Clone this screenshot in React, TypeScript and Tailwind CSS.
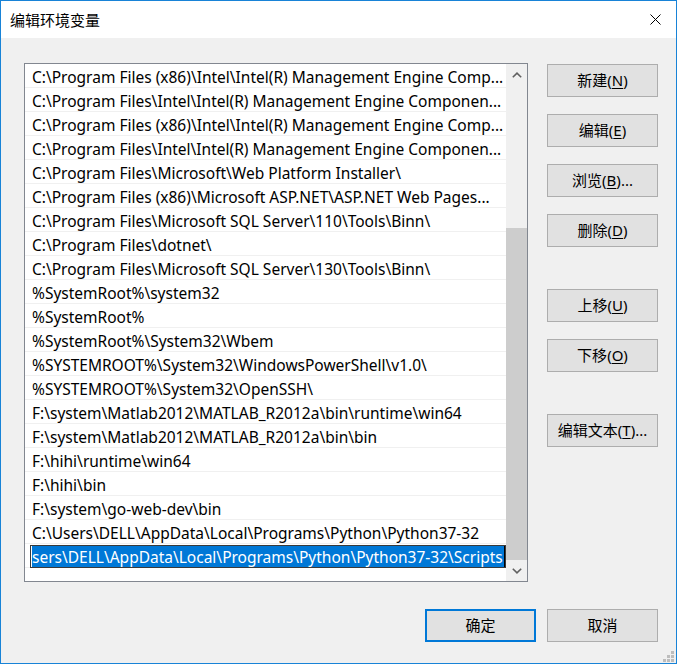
import React from "react";

const rows: string[] = [
  "C:\\Program Files (x86)\\Intel\\Intel(R) Management Engine Comp...",
  "C:\\Program Files\\Intel\\Intel(R) Management Engine Componen...",
  "C:\\Program Files (x86)\\Intel\\Intel(R) Management Engine Comp...",
  "C:\\Program Files\\Intel\\Intel(R) Management Engine Componen...",
  "C:\\Program Files\\Microsoft\\Web Platform Installer\\",
  "C:\\Program Files (x86)\\Microsoft ASP.NET\\ASP.NET Web Pages...",
  "C:\\Program Files\\Microsoft SQL Server\\110\\Tools\\Binn\\",
  "C:\\Program Files\\dotnet\\",
  "C:\\Program Files\\Microsoft SQL Server\\130\\Tools\\Binn\\",
  "%SystemRoot%\\system32",
  "%SystemRoot%",
  "%SystemRoot%\\System32\\Wbem",
  "%SYSTEMROOT%\\System32\\WindowsPowerShell\\v1.0\\",
  "%SYSTEMROOT%\\System32\\OpenSSH\\",
  "F:\\system\\Matlab2012\\MATLAB_R2012a\\bin\\runtime\\win64",
  "F:\\system\\Matlab2012\\MATLAB_R2012a\\bin\\bin",
  "F:\\hihi\\runtime\\win64",
  "F:\\hihi\\bin",
  "F:\\system\\go-web-dev\\bin",
  "C:\\Users\\DELL\\AppData\\Local\\Programs\\Python\\Python37-32",
];

const font = {
  fontFamily: '"Noto Sans", "Noto Sans CJK SC", sans-serif',
};

function Btn({
  label,
  mn,
  suffix = "",
  primary = false,
}: {
  label: string;
  mn?: string;
  suffix?: string;
  primary?: boolean;
}) {
  return (
    <div
      className={
        primary
          ? "w-[111px] h-[33px] shrink-0 border-2 border-[#0078d7] bg-[#e1e1e1] flex items-center justify-center text-[15px] text-black"
          : "w-[111px] h-[33px] shrink-0 border border-[#adadad] bg-[#e1e1e1] flex items-center justify-center text-[15px] text-black"
      }
    >
      <span className="whitespace-nowrap leading-none">
        {label}
        {mn ? (
          <>
            (<span className="underline underline-offset-2">{mn}</span>)
          </>
        ) : null}
        {suffix}
      </span>
    </div>
  );
}

export default function App() {
  return (
    <div
      className="relative w-[677px] h-[664px] border border-[#1883d7] bg-[#f0f0f0] flex flex-col text-black"
      style={font}
    >
      {/* title bar */}
      <div className="h-[37px] bg-white flex items-center justify-between shrink-0">
        <span className="pl-[9px] pt-[1px] text-[15px] leading-none">编辑环境变量</span>
        <svg width="11" height="11" viewBox="0 0 11 11" className="mr-[15px]">
          <path d="M0.5 0.5 L10.5 10.5 M10.5 0.5 L0.5 10.5" stroke="#000" strokeWidth="1" fill="none" />
        </svg>
      </div>

      {/* body */}
      <div className="flex flex-col pt-[25px] pl-[23px] pr-[18px] pb-[21px]">
        <div className="flex gap-[19px]">
          {/* list box */}
          <div className="w-[504px] h-[519px] border border-[#828790] bg-white flex">
            <div className="w-[481px] flex flex-col text-[15.5px]">
              {rows.map((r, i) => (
                <div
                  key={i}
                  className="h-[24px] border-b border-[#f0f0f0] pl-[7px] pt-[3px] leading-[20px] whitespace-nowrap overflow-hidden"
                >
                  {r}
                </div>
              ))}
              <div className="h-[24px] border-b border-[#f0f0f0] pt-[1px] pl-[5px]">
                <div className="w-[476px] h-[23px] border border-[#3a3a3a] flex items-center pl-[1px]">
                  <div className="w-[472px] h-[21px] bg-[#0078d7] text-white pt-[1px] leading-[20px] whitespace-nowrap overflow-hidden">
                    sers\DELL\AppData\Local\Programs\Python\Python37-32\Scripts
                  </div>
                  <div className="w-[1px] h-[21px] bg-black" />
                </div>
              </div>
            </div>
            {/* scrollbar */}
            <div className="w-[21px] bg-[#f0f0f0] flex flex-col">
              <div className="h-[21px] flex items-center justify-center">
                <svg width="10" height="6" viewBox="0 0 10 6">
                  <path d="M0.8 5.3 L5 1.2 L9.2 5.3" stroke="#606060" strokeWidth="1.6" fill="none" />
                </svg>
              </div>
              <div className="h-[143px]" />
              <div className="h-[332px] bg-[#cdcdcd]" />
              <div className="h-[21px] flex items-center justify-center">
                <svg width="10" height="6" viewBox="0 0 10 6">
                  <path d="M0.8 0.7 L5 4.8 L9.2 0.7" stroke="#606060" strokeWidth="1.6" fill="none" />
                </svg>
              </div>
            </div>
          </div>

          {/* buttons column */}
          <div className="flex flex-col pt-[1px]">
            <Btn label="新建" mn="N" />
            <div className="h-[17px]" />
            <Btn label="编辑" mn="E" />
            <div className="h-[17px]" />
            <Btn label="浏览" mn="B" suffix="..." />
            <div className="h-[17px]" />
            <Btn label="删除" mn="D" />
            <div className="h-[42px]" />
            <Btn label="上移" mn="U" />
            <div className="h-[17px]" />
            <Btn label="下移" mn="O" />
            <div className="h-[42px]" />
            <Btn label="编辑文本" mn="T" suffix="..." />
          </div>
        </div>

        <div className="flex justify-end gap-[11px] mt-[27px]">
          <Btn label="确定" primary />
          <Btn label="取消" />
        </div>
      </div>

      {/* resize grip */}
      <svg width="11" height="11" viewBox="0 0 11 11" className="absolute right-[2px] bottom-[1px]">
        <rect x="8" y="0" width="3" height="3" fill="#bdbdbd" />
        <rect x="4" y="4" width="3" height="3" fill="#bdbdbd" />
        <rect x="8" y="4" width="3" height="3" fill="#bdbdbd" />
        <rect x="0" y="8" width="3" height="3" fill="#bdbdbd" />
        <rect x="4" y="8" width="3" height="3" fill="#bdbdbd" />
        <rect x="8" y="8" width="3" height="3" fill="#bdbdbd" />
      </svg>
    </div>
  );
}
